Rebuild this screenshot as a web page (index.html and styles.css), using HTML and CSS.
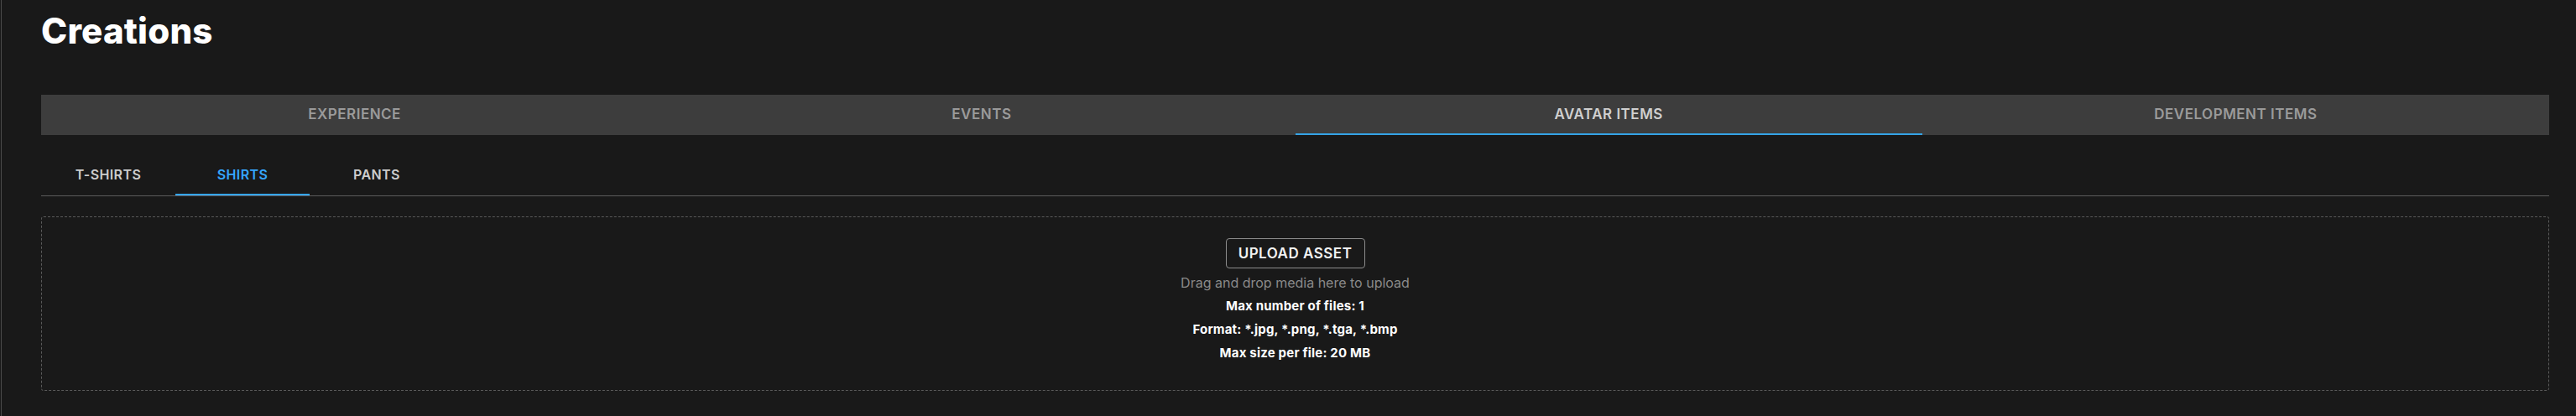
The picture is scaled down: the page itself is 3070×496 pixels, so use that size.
FILE: index.html
```html
<!DOCTYPE html>
<html lang="en">
<head>
<meta charset="utf-8">
<title>Creations</title>
<link rel="stylesheet" href="styles.css">
</head>
<body>
<div class="page">
  <h1 class="title">Creations</h1>
  <nav class="main-tabs">
    <div class="main-tab">EXPERIENCE</div>
    <div class="main-tab">EVENTS</div>
    <div class="main-tab active">AVATAR ITEMS</div>
    <div class="main-tab">DEVELOPMENT ITEMS</div>
  </nav>
  <nav class="sub-tabs">
    <div class="sub-tab">T-SHIRTS</div>
    <div class="sub-tab active">SHIRTS</div>
    <div class="sub-tab">PANTS</div>
  </nav>
  <section class="dropzone">
    <button class="upload-btn" type="button">UPLOAD ASSET</button>
    <p class="hint">Drag and drop media here to upload</p>
    <p class="rule">Max number of files: 1</p>
    <p class="rule">Format: *.jpg, *.png, *.tga, *.bmp</p>
    <p class="rule">Max size per file: 20 MB</p>
  </section>
</div>
</body>
</html>
```
FILE: styles.css
```css
* { box-sizing: border-box; }
html, body {
  margin: 0;
  padding: 0;
  background: #191919;
  height: 100%;
}
body {
  font-family: Inter, "Noto Sans", sans-serif;
  color: #fff;
}
.page {
  margin-left: 1px;
  border-left: 1px solid #4a4a4a;
  min-height: 100%;
  padding: 16px 32px 0 47px;
}
.title {
  margin: 0;
  font-size: 42px;
  line-height: 42px;
  font-weight: 800;
  color: #fff;
  letter-spacing: 0.2px;
}
.main-tabs {
  margin-top: 55px;
  display: grid;
  grid-template-columns: repeat(4, 1fr);
  height: 48px;
  background: #3d3d3d;
}
.main-tab {
  display: flex;
  align-items: center;
  justify-content: center;
  font-size: 17px;
  letter-spacing: 0.5px;
  font-weight: 600;
  color: #9a9a9a;
  border-bottom: 2px solid transparent;
}
.main-tab.active {
  color: #cfcfcf;
  border-bottom-color: #35a3e6;
}
.sub-tabs {
  margin-top: 24px;
  display: flex;
  border-bottom: 1px solid #5c5c5c;
}
.sub-tab {
  width: 160px;
  height: 48px;
  display: flex;
  align-items: center;
  justify-content: center;
  font-size: 16px;
  letter-spacing: 0.4px;
  font-weight: 600;
  color: #cdcdcd;
  border-bottom: 2px solid transparent;
}
.sub-tab.active {
  color: #35a6ff;
  border-bottom-color: #35a6ff;
}
.dropzone {
  margin-top: 24px;
  height: 208px;
  border: 1px dashed #5a5a5a;
  border-radius: 3px;
  display: flex;
  flex-direction: column;
  align-items: center;
  padding-top: 25px;
}
.upload-btn {
  width: 166px;
  height: 36px;
  background: transparent;
  border: 1px solid #8c8c8c;
  border-radius: 4px;
  color: #f2f2f2;
  font-family: inherit;
  font-size: 17px;
  letter-spacing: 0.5px;
  font-weight: 600;
  padding: 0;
}
.hint {
  margin: 3px 0 0;
  font-size: 16px;
  line-height: 28px;
  color: #8a8a8a;
}
.rule {
  margin: 0;
  font-size: 15px;
  letter-spacing: 0.2px;
  line-height: 28px;
  font-weight: 700;
  color: #fff;
}
```
